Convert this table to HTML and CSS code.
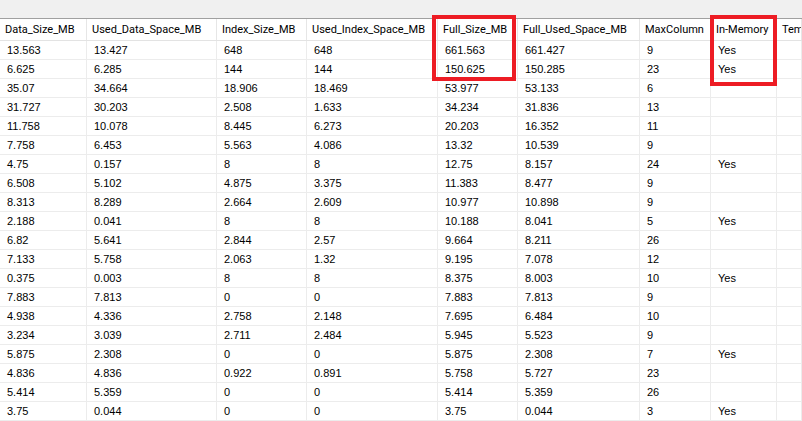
FILE: index.html
```html
<!DOCTYPE html>
<html>
<head>
<meta charset="utf-8">
<link rel="stylesheet" href="styles.css">
</head>
<body>
<div class="topbar"></div>
<div class="grid">
  <div class="row head"><div>Data_Size_MB</div><div>Used_Data_Space_MB</div><div>Index_Size_MB</div><div>Used_Index_Space_MB</div><div>Full_Size_MB</div><div>Full_Used_Space_MB</div><div>MaxColumn</div><div>In-Memory</div><div>Temporal</div></div>
  <div class="row"><div>13.563</div><div>13.427</div><div>648</div><div>648</div><div>661.563</div><div>661.427</div><div>9</div><div>Yes</div><div></div></div>
  <div class="row"><div>6.625</div><div>6.285</div><div>144</div><div>144</div><div>150.625</div><div>150.285</div><div>23</div><div>Yes</div><div></div></div>
  <div class="row"><div>35.07</div><div>34.664</div><div>18.906</div><div>18.469</div><div>53.977</div><div>53.133</div><div>6</div><div></div><div></div></div>
  <div class="row"><div>31.727</div><div>30.203</div><div>2.508</div><div>1.633</div><div>34.234</div><div>31.836</div><div>13</div><div></div><div></div></div>
  <div class="row"><div>11.758</div><div>10.078</div><div>8.445</div><div>6.273</div><div>20.203</div><div>16.352</div><div>11</div><div></div><div></div></div>
  <div class="row"><div>7.758</div><div>6.453</div><div>5.563</div><div>4.086</div><div>13.32</div><div>10.539</div><div>9</div><div></div><div></div></div>
  <div class="row"><div>4.75</div><div>0.157</div><div>8</div><div>8</div><div>12.75</div><div>8.157</div><div>24</div><div>Yes</div><div></div></div>
  <div class="row"><div>6.508</div><div>5.102</div><div>4.875</div><div>3.375</div><div>11.383</div><div>8.477</div><div>9</div><div></div><div></div></div>
  <div class="row"><div>8.313</div><div>8.289</div><div>2.664</div><div>2.609</div><div>10.977</div><div>10.898</div><div>9</div><div></div><div></div></div>
  <div class="row"><div>2.188</div><div>0.041</div><div>8</div><div>8</div><div>10.188</div><div>8.041</div><div>5</div><div>Yes</div><div></div></div>
  <div class="row"><div>6.82</div><div>5.641</div><div>2.844</div><div>2.57</div><div>9.664</div><div>8.211</div><div>26</div><div></div><div></div></div>
  <div class="row"><div>7.133</div><div>5.758</div><div>2.063</div><div>1.32</div><div>9.195</div><div>7.078</div><div>12</div><div></div><div></div></div>
  <div class="row"><div>0.375</div><div>0.003</div><div>8</div><div>8</div><div>8.375</div><div>8.003</div><div>10</div><div>Yes</div><div></div></div>
  <div class="row"><div>7.883</div><div>7.813</div><div>0</div><div>0</div><div>7.883</div><div>7.813</div><div>9</div><div></div><div></div></div>
  <div class="row"><div>4.938</div><div>4.336</div><div>2.758</div><div>2.148</div><div>7.695</div><div>6.484</div><div>10</div><div></div><div></div></div>
  <div class="row"><div>3.234</div><div>3.039</div><div>2.711</div><div>2.484</div><div>5.945</div><div>5.523</div><div>9</div><div></div><div></div></div>
  <div class="row"><div>5.875</div><div>2.308</div><div>0</div><div>0</div><div>5.875</div><div>2.308</div><div>7</div><div>Yes</div><div></div></div>
  <div class="row"><div>4.836</div><div>4.836</div><div>0.922</div><div>0.891</div><div>5.758</div><div>5.727</div><div>23</div><div></div><div></div></div>
  <div class="row"><div>5.414</div><div>5.359</div><div>0</div><div>0</div><div>5.414</div><div>5.359</div><div>26</div><div></div><div></div></div>
  <div class="row"><div>3.75</div><div>0.044</div><div>0</div><div>0</div><div>3.75</div><div>0.044</div><div>3</div><div>Yes</div><div></div></div>
</div>
<div class="mark mark-full"></div>
<div class="mark mark-mem"></div>
</body>
</html>
```

FILE: styles.css
```css
html, body {
  margin: 0;
  padding: 0;
  background: #ffffff;
  overflow: hidden;
}
body {
  width: 802px;
  height: 421px;
  position: relative;
  font-family: "Liberation Sans", Arial, sans-serif;
  font-size: 11px;
  color: #000;
}
.topbar {
  height: 18px;
  background: #f0f0f0;
  border-bottom: 1px solid #a0a0a0;
}
.grid {
  display: flex;
  flex-direction: column;
}
.row {
  display: grid;
  grid-template-columns: 87px 130px 90px 131px 80px 122px 71px 66px 1fr;
  height: 19px;
  box-sizing: border-box;
  border-bottom: 1px solid #ececec;
}
.row > div {
  border-right: 1px solid #ececec;
  padding-left: 7px;
  line-height: 19px;
  white-space: nowrap;
  overflow: hidden;
}
.row.head {
  height: 22px;
  border-bottom: 1px solid #e3e3e3;
  font-family: Roboto, "Liberation Sans", sans-serif;
  font-size: 11px;
}
.row.head > div {
  padding-left: 5px;
  line-height: 22px;
  border-right: 1px solid #e6e6e6;
}
.mark {
  position: absolute;
  border: 4px solid #ed1c24;
  box-sizing: border-box;
}
.mark-full {
  left: 432px;
  top: 15px;
  width: 84px;
  height: 66px;
}
.mark-mem {
  left: 710px;
  top: 15px;
  width: 67px;
  height: 71px;
}
```
